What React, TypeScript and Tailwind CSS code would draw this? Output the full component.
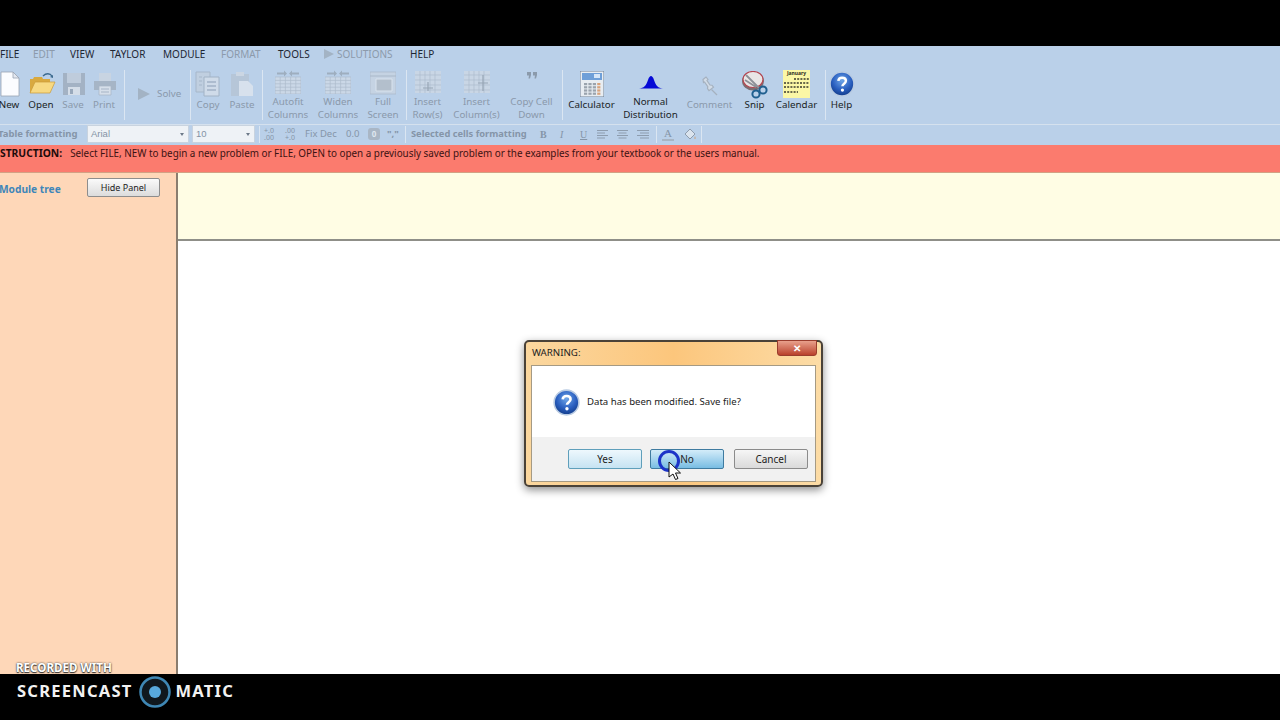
import React from "react";

const font = "font-['Noto_Sans','Open_Sans',sans-serif]";

function NewIcon() {
  return (
    <svg width="26" height="26" viewBox="0 0 26 26">
      <path d="M5 1h12l6 6v18H5z" fill="#fbfcff" stroke="#9aa3b2" strokeWidth="0.8" />
      <path d="M17 1v6h6z" fill="#e4e8f0" stroke="#9aa3b2" strokeWidth="0.8" />
    </svg>
  );
}
function OpenIcon() {
  return (
    <svg width="28" height="26" viewBox="0 0 28 26" className="ml-[2px]">
      <path d="M2 22V8h3l1-2h8l1 2h7v14z" fill="#d9a93f" />
      <path d="M2 22l5-11h20l-5 11z" fill="#f7d982" stroke="#c99a36" strokeWidth="0.7" />
      <path d="M15 5c3-3 7-3 9 0" fill="none" stroke="#3c6a8e" strokeWidth="1.3" />
      <path d="M25 7l-3-1 3-2z" fill="#3c6a8e" />
    </svg>
  );
}
function SaveIcon() {
  return (
    <svg width="24" height="24" viewBox="0 0 24 24" className="mt-[1px] ml-[2px]">
      <path d="M1 1h22v22H1z" fill="#a3b2c4" />
      <path d="M5 1h14v10H5z" fill="#bfccdc" />
      <path d="M6 15h12v8H6z" fill="#d4dde8" />
      <path d="M8 17h3v5H8z" fill="#98a8bb" />
    </svg>
  );
}
function PrintIcon() {
  return (
    <svg width="24" height="24" viewBox="0 0 24 24" className="mt-[1px] ml-[1px]">
      <path d="M6 1h12v8H6z" fill="#c8d4e2" />
      <path d="M1 9h22v9H1z" fill="#a6b5c6" />
      <path d="M6 14h12v9H6z" fill="#d6dfea" stroke="#a6b4c6" strokeWidth="0.7" />
      <path d="M8 17h8M8 20h8" stroke="#a6b4c6" strokeWidth="1" />
    </svg>
  );
}
function CopyIcon() {
  return (
    <svg width="26" height="26" viewBox="0 0 26 26">
      <path d="M1 1h14v20H1z" fill="#c0cfe0" stroke="#a6b7ca" />
      <path d="M9 6h15v19H9z" fill="#cfdbe9" stroke="#a2b3c6" />
      <path d="M12 11h9M12 15h9M12 19h9" stroke="#a2b3c6" strokeWidth="1.4" />
      <path d="M4 6h3M4 10h3M4 14h3" stroke="#a6b7ca" />
    </svg>
  );
}
function PasteIcon() {
  return (
    <svg width="24" height="26" viewBox="0 0 24 26">
      <path d="M1 3h18v22H1z" fill="#b6c6d8" />
      <path d="M6 1h8v4H6z" fill="#cbd6e3" />
      <path d="M9 10h9l5 5v10H9z" fill="#d7e1ed" />
    </svg>
  );
}
function GridIcon() {
  const w = 26;
  const h = 17;
  const cols = [0, 5.2, 10.4, 15.6, 20.8, 26];
  const rows = [0, 3.4, 6.8, 10.2, 13.6, 17];
  return (
    <svg width={w} height={h + 7} viewBox={`0 0 ${w} ${h + 7}`} className="-mt-[1px]">
      <path d="M2 2.500h7V.5l3 3-3 3v-2H2z" fill="#9eaebf" />
      <path d="M24 2.500h-7V.5l-3 3 3 3v-2h7z" fill="#9eaebf" />
      <rect x="0" y="7" width={w} height={h} fill="#cbd8e7" />
      {cols.map((x) => (
        <path key={x} d={`M${x} 7v${h}`} stroke="#adbccd" strokeWidth="0.7" />
      ))}
      {rows.map((y) => (
        <path key={y} d={`M0 ${y + 7}h${w}`} stroke="#adbccd" strokeWidth="0.7" />
      ))}
    </svg>
  );
}
function FullScreenIcon() {
  return (
    <svg width="26" height="24" viewBox="0 0 26 24">
      <path d="M0 1h26v22H0z" fill="#c5d3e3" stroke="#a9b8c9" strokeWidth="0.7" />
      <path d="M0 5h26" stroke="#a9b8c9" />
      <path d="M6 8h16v12H6z" fill="#b3bfcc" stroke="#d9e3ee" />
    </svg>
  );
}
function InsertIcon({ col = false }: { col?: boolean }) {
  return (
    <svg width="26" height="22" viewBox="0 0 26 22">
      <rect width="26" height="22" fill="#c9d6e5" />
      {[5, 10, 15, 20].map((x) => (
        <path key={x} d={`M${x} 0v22`} stroke="#adbccd" strokeWidth="0.7" />
      ))}
      {[4, 9, 14, 19].map((y) => (
        <path key={y} d={`M0 ${y}h26`} stroke="#adbccd" strokeWidth="0.7" />
      ))}
      {col ? (
        <path d="M19 4v16M14 12h10" stroke="#97a5b5" strokeWidth="1.2" />
      ) : (
        <path d="M13 11v9M8 17h10" stroke="#97a5b5" strokeWidth="1.2" />
      )}
    </svg>
  );
}
function CopyDownIcon() {
  return (
    <svg width="10" height="7" viewBox="0 0 10 7" className="mt-[1px]">
      <path d="M0 0h4v3L3 6.500H1.500L2 3.500H0zM6 0h4v3L9 6.500H7.500L8 3.500H6z" fill="#8b9aab" />
    </svg>
  );
}
function CalculatorIcon() {
  const cells = [];
  for (let r = 0; r < 4; r++) {
    for (let c = 0; c < 4; c++) {
      cells.push(
        <rect key={`${r}-${c}`} x={4 + c * 4.4} y={12 + r * 3.2} width="3.2" height="2.2" fill={c === 3 ? "#d8a37c" : "#9aa3ad"} />
      );
    }
  }
  return (
    <svg width="24" height="26" viewBox="0 0 24 26">
      <path d="M0 0h24v26H0z" fill="#e8edf2" stroke="#6c7f95" />
      <path d="M2 2h20v7H2z" fill="#6f9fd8" />
      <path d="M14 3h6v4h-6z" fill="#d6e6f8" />
      {cells}
    </svg>
  );
}
function NormalIcon() {
  return (
    <svg width="24" height="14" viewBox="0 0 24 14" className="mt-[4px]">
      <path d="M0 13.5C5 13 7 11 9 5c1-3 2-4 3-4s2 1 3 4c2 6 4 8 9 8.500z" fill="#0509d6" />
    </svg>
  );
}
function PinIcon() {
  return (
    <svg width="16" height="20" viewBox="0 0 16 20" fill="none" stroke="#a5b1bf" strokeWidth="1.2" className="mt-[5px]">
      <path d="M1 3.500L4 1l2 2.500-1 1L8 9l2 .2 1.500 2-4.500 3.500-1.500-2 .3-2L2.500 6 1.500 6.500z" fill="#d2dce7" />
      <path d="M9.500 13.500L15 19" />
    </svg>
  );
}
function SnipIcon() {
  return (
    <svg width="28" height="28" viewBox="0 0 28 28">
      <ellipse cx="12" cy="10" rx="11" ry="9.500" fill="#7a6e72" />
      <ellipse cx="12" cy="8.500" rx="10" ry="8" fill="#e9e6e6" stroke="#b64550" strokeWidth="1.2" />
      <path d="M5 4l13 13M4 9l11 7" stroke="#8d9097" strokeWidth="1.8" />
      <circle cx="22" cy="19" r="3.600" fill="none" stroke="#1f5f8f" strokeWidth="2" />
      <circle cx="15" cy="23" r="3.600" fill="none" stroke="#1f5f8f" strokeWidth="2" />
    </svg>
  );
}
function CalendarIcon() {
  const rows = [9, 13, 17, 21];
  return (
    <div className="relative -mt-[1px] h-[28px] w-[27px] shrink-0 bg-[#fbf7a6]">
      <div className="text-center text-[5px] leading-[6px] font-bold text-[#2b2b20]">January</div>
      <svg className="absolute top-0 left-0" width="27" height="28" viewBox="0 0 27 28">
        {rows.map((y, i) => (
          <path
            key={y}
            d={i === 0 ? `M11 ${y}h15` : i === 3 ? `M1 ${y + 1}h14` : `M1 ${y}h25`}
            stroke="#3a3a2c"
            strokeWidth="1.3"
            strokeDasharray="2 1.2"
          />
        ))}
      </svg>
    </div>
  );
}
function HelpIcon({ size = 24, className = "" }: { size?: number; className?: string }) {
  return (
    <svg width={size} height={size} viewBox="0 0 24 24" className={className}>
      <defs>
        <radialGradient id="helpg" cx="50%" cy="35%" r="65%">
          <stop offset="0" stopColor="#6fa6e8" />
          <stop offset="0.6" stopColor="#2a5fc0" />
          <stop offset="1" stopColor="#123c8a" />
        </radialGradient>
      </defs>
      <circle cx="12" cy="12" r="11" fill="url(#helpg)" stroke="#b9cbe2" strokeWidth="1.4" />
      <path d="M8.600 9.200c.2-2 1.600-3 3.500-3 2 0 3.500 1.100 3.500 2.900 0 2.600-3.200 2.600-3.200 5" fill="none" stroke="#fff" strokeWidth="2.300" />
      <circle cx="12.400" cy="17.600" r="1.500" fill="#fff" />
    </svg>
  );
}
function SolveArrow() {
  return (
    <svg width="14" height="14" viewBox="0 0 14 14">
      <path d="M1 1l12 6-12 6z" fill="#a3b3c4" />
    </svg>
  );
}

type Tool = {
  width: string;
  icon: React.ReactNode;
  label: React.ReactNode;
  on?: boolean;
  two?: boolean;
};

function ToolButton({ width, icon, label, on, two }: Tool) {
  return (
    <div className={`flex h-full shrink-0 flex-col items-center ${width}`}>
      <div className="flex h-[27px] items-start justify-center overflow-visible">{icon}</div>
      <div className={`text-center text-[9.800px] leading-[13px] whitespace-nowrap ${two ? "-mt-[3px]" : ""} ${on ? "text-[#1a1f26]" : "text-[#8a99ab]"}`}>
        {label}
      </div>
    </div>
  );
}

function Sep({ className }: { className: string }) {
  return <div className={`-mt-[1px] h-[50px] w-[1px] shrink-0 self-start bg-[#dbe6f2] ${className}`} />;
}

function MenuBar() {
  const items = [
    ["FILE", "w-[33px] text-[#1d2633]"],
    ["EDIT", "w-[37px] text-[#8c9aab]"],
    ["VIEW", "w-[40px] text-[#1d2633]"],
    ["TAYLOR", "w-[53px] text-[#1d2633]"],
    ["MODULE", "w-[58px] text-[#1d2633]"],
    ["FORMAT", "w-[57px] text-[#8c9aab]"],
  ];
  return (
    <div className="flex h-[15px] shrink-0 items-center text-[10px] leading-[14px] whitespace-nowrap">
      {items.map(([t, c]) => (
        <div key={t} className={c}>{t}</div>
      ))}
      <div className="w-[45px] text-[#1d2633]">TOOLS</div>
      <div className="flex w-[87px] items-center text-[#8c9aab]">
        <svg width="12" height="12" viewBox="0 0 12 12" className="mr-[2px]">
          <path d="M1 1l10 5-10 5z" fill="#a3b3c4" />
        </svg>
        SOLUTIONS
      </div>
      <div className="text-[#1d2633]">HELP</div>
    </div>
  );
}

function Toolbar() {
  return (
    <div className="flex h-[63px] shrink-0 items-start pt-[10px]">
      <div className="flex h-[50px] w-[120px] shrink-0 -translate-x-[6px]">
        <ToolButton width="w-[30px]" icon={<NewIcon />} label="New" on />
        <ToolButton width="w-[34px]" icon={<OpenIcon />} label="Open" on />
        <ToolButton width="w-[30px]" icon={<SaveIcon />} label="Save" />
        <ToolButton width="w-[32px]" icon={<PrintIcon />} label="Print" />
      </div>
      <Sep className="ml-[4px]" />
      <div className="flex h-[46px] w-[65px] shrink-0 items-center pl-[12px] text-[9.800px] text-[#8a99ab]">
        <SolveArrow />
        <span className="ml-[6px]">Solve</span>
      </div>
      <Sep className="" />
      <ToolButton width="w-[34px]" icon={<CopyIcon />} label="Copy" />
      <ToolButton width="w-[34px]" icon={<PasteIcon />} label="Paste" />
      <Sep className="ml-[3px]" />
      <ToolButton width="w-[50px]" icon={<GridIcon />} label={<>Autofit<br />Columns</>} two />
      <ToolButton width="w-[50px]" icon={<GridIcon />} label={<>Widen<br />Columns</>} two />
      <ToolButton width="w-[40px]" icon={<FullScreenIcon />} label={<>Full<br />Screen</>} two />
      <Sep className="ml-[3px]" />
      <ToolButton width="w-[41px]" icon={<InsertIcon />} label={<>Insert<br />Row(s)</>} two />
      <ToolButton width="w-[57px]" icon={<InsertIcon col />} label={<>Insert<br />Column(s)</>} two />
      <ToolButton width="w-[53px]" icon={<CopyDownIcon />} label={<>Copy Cell<br />Down</>} two />
      <Sep className="ml-[4px]" />
      <ToolButton width="w-[57px]" icon={<CalculatorIcon />} label="Calculator" on />
      <ToolButton width="w-[61px]" icon={<NormalIcon />} label={<>Normal<br />Distribution</>} on two />
      <ToolButton width="w-[57px]" icon={<PinIcon />} label="Comment" />
      <ToolButton width="w-[33px]" icon={<SnipIcon />} label="Snip" on />
      <ToolButton width="w-[51px]" icon={<CalendarIcon />} label="Calendar" on />
      <Sep className="ml-[3px]" />
      <ToolButton width="w-[31px]" icon={<HelpIcon size={26} className="ml-[1px]" />} label="Help" on />
    </div>
  );
}

function Combo({ width, text }: { width: string; text: string }) {
  return (
    <div className={`flex h-[18px] shrink-0 items-center justify-between border border-[#c8d3df] bg-[#eef2f6] pr-[4px] pl-[3px] text-[9.500px] text-[#8493a5] ${width}`}>
      <span className="font-['Liberation_Sans',sans-serif]">{text}</span>
      <span className="h-0 w-0 border-x-[2.500px] border-t-[3px] border-x-transparent border-t-[#6d7a89]" />
    </div>
  );
}

function FormatSep({ className }: { className: string }) {
  return <div className={`h-[17px] w-[1px] shrink-0 bg-[#dbe6f2] ${className}`} />;
}

function FormatBar() {
  return (
    <div className="flex h-[21px] shrink-0 items-center border-t border-[#d5e1ee] pb-[2px] text-[9.500px] whitespace-nowrap text-[#8595a8]">
      <div className="w-[87px] shrink-0 -translate-x-[2px] font-bold">Table formatting</div>
      <Combo width="w-[102px]" text="Arial" />
      <Combo width="w-[63px] ml-[3px]" text="10" />
      <FormatSep className="ml-[4px]" />
      <span className="ml-[4px] w-[21px] text-[7px] leading-[7px]">+.0<br />.00</span>
      <span className="w-[20px] text-[7px] leading-[7px]">.00<br />+.0</span>
      <span className="w-[41px]">Fix Dec</span>
      <span className="w-[22px]">0.0</span>
      <span className="flex h-[12px] w-[12px] items-center justify-center rounded-[3px] bg-[#a9b6c5] text-[8px] font-bold text-[#dfe7f0]">0</span>
      <span className="ml-[7px] w-[18px] font-bold">","</span>
      <FormatSep className="" />
      <span className="ml-[5px] w-[129px] text-[9.300px] font-bold">Selected cells formatting</span>
      <span className="w-[20px] font-['Liberation_Serif',serif] text-[10px] font-bold">B</span>
      <span className="w-[20px] font-['Liberation_Serif',serif] text-[10px] italic">I</span>
      <span className="w-[17px] font-['Liberation_Serif',serif] text-[10px] underline">U</span>
      <svg width="52" height="11" viewBox="0 0 52 11" stroke="#8d9cae" strokeWidth="1">
        <path d="M0 1.500h11M0 4h8M0 6.500h11M0 9h8" />
        <path d="M20 1.500h11M21.500 4h8M20 6.500h11M21.500 9h8" />
        <path d="M40 1.500h12M43 4h9M40 6.500h12M43 9h9" />
      </svg>
      <FormatSep className="ml-[7px]" />
      <div className="ml-[5px] w-[12px] border-b-2 border-[#a8b5c4] text-center font-['Liberation_Serif',serif] text-[11px] leading-[11px]">A</div>
      <svg width="14" height="14" viewBox="0 0 14 14" className="ml-[9px]">
        <path d="M2 7l5-5 5 5-5 5z" fill="#dbe4ee" stroke="#8e9cad" />
        <path d="M12 9c1 2 1 3 0 3s-1-1 0-3z" fill="#c9a98c" />
      </svg>
      <FormatSep className="ml-[4px]" />
    </div>
  );
}

function Instruction() {
  return (
    <div className="flex h-[28px] shrink-0 items-start overflow-hidden border-b border-[#d2a184] bg-[#fb7b6e] pt-[1px] text-[9.850px] leading-[14px] whitespace-nowrap text-[#3a1212]">
      <span className="text-[10.300px] font-bold text-[#1d0b0b]">STRUCTION:</span>
      <span className="ml-[8px]">
        Select FILE, NEW to begin a new problem or FILE, OPEN to open a previously saved problem or the examples from your textbook or the users manual.
      </span>
    </div>
  );
}

function Body() {
  return (
    <div className="flex min-h-0 flex-1">
      <aside className="relative w-[178px] shrink-0 border-r-[2px] border-r-[#8a7d6f] bg-[#fed7b8]">
        <div className="flex items-start">
          <div className="mt-[9px] -ml-[1px] w-[88px] text-[10.200px] font-bold whitespace-nowrap text-[#3f86b8]">Module tree</div>
          <button className="mt-[5px] h-[19px] w-[73px] rounded-[2px] border border-[#8d8d8d] bg-gradient-to-b from-[#fafafa] to-[#dcdcdc] text-[9px] leading-[15px] text-[#222]">
            Hide Panel
          </button>
        </div>
        <div className="absolute bottom-0 left-[16px] text-[11.600px] leading-[12px] font-bold whitespace-nowrap text-white [text-shadow:0_1px_1px_#333,0_0_2px_#333]">
          RECORDED WITH
        </div>
      </aside>
      <main className="flex min-w-0 flex-1 flex-col bg-white">
        <div className="h-[68px] shrink-0 border-b-[2px] border-[#8f8f88] bg-[#fffde4]" />
      </main>
    </div>
  );
}

function DialogButton({ label, tone }: { label: string; tone: "blue" | "hot" | "gray" }) {
  const tones = {
    blue: "border-[#5f9fbb] from-[#eef8fd] to-[#c6e3f2]",
    hot: "border-[#3f7ba0] from-[#d3ecf9] to-[#78bde3]",
    gray: "border-[#8b8b8b] from-[#f6f6f6] to-[#dadada]",
  };
  return (
    <div className={`flex h-[20px] w-[74px] items-center justify-center rounded-[2px] border bg-gradient-to-b text-[10px] text-[#222] ${tones[tone]}`}>
      {label}
    </div>
  );
}

function Dialog() {
  return (
    <div className="absolute top-[340px] left-[524px] flex h-[147px] w-[299px] flex-col rounded-[5px] border-[2px] border-[#4a4238] bg-gradient-to-r from-[#fbd79e] via-[#fcc67c] to-[#fcdca6] px-[5px] pb-[3px] shadow-[0_3px_8px_rgba(0,0,0,0.45)]">
      <div className="relative flex h-[23px] shrink-0 items-center pl-[1px] text-[9.700px] text-[#222]">
        WARNING:
        <div className="absolute top-[-2px] right-[-1px] flex h-[16px] w-[40px] items-center justify-center rounded-b-[3px] border border-[#9a3d2d] bg-gradient-to-b from-[#e8a08c] to-[#b9402b] text-[10px] leading-[10px] font-bold text-white">
          ✕
        </div>
      </div>
      <div className="flex min-h-0 flex-1 flex-col border border-[#a59a84] bg-white">
        <div className="flex h-[71px] shrink-0 items-center pt-[2px] pl-[21px] text-[9.600px] text-[#222]">
          <HelpIcon size={27} />
          <span className="ml-[7px]">Data has been modified. Save file?</span>
        </div>
        <div className="flex flex-1 items-center bg-[#f1f1f1] pl-[36px]">
          <DialogButton label="Yes" tone="blue" />
          <div className="ml-[8px]"><DialogButton label="No" tone="hot" /></div>
          <div className="ml-[10px]"><DialogButton label="Cancel" tone="gray" /></div>
        </div>
      </div>
    </div>
  );
}

function Cursor() {
  return (
    <div className="absolute top-[450px] left-[658px]">
      <div className="h-[22px] w-[22px] rounded-full border-[3px] border-[#1c34c8]" />
      <svg className="absolute top-[11px] left-[10px]" width="14" height="20" viewBox="0 0 14 20">
        <path d="M1 1v15l4-3 2.500 5.500 2.500-1-2.500-5.500h5z" fill="#fff" stroke="#111" strokeWidth="1" />
      </svg>
    </div>
  );
}

function Footer() {
  return (
    <div className="flex h-[46px] shrink-0 items-start bg-black pt-[2px] pl-[17px] text-[16.500px] leading-[30px] font-bold tracking-[1.250px] text-[#f2f2f2]">
      <span>SCREENCAST</span>
      <svg width="32" height="32" viewBox="0 0 32 32" className="ml-[6px] mr-[5px]">
        <circle cx="16" cy="16" r="14.500" fill="#10181e" stroke="#3f87b4" strokeWidth="2.500" />
        <circle cx="16" cy="16" r="6" fill="#58a9dd" />
      </svg>
      <span>MATIC</span>
    </div>
  );
}

export default function App() {
  return (
    <div className={`relative flex h-[720px] w-[1280px] flex-col overflow-hidden bg-black ${font}`}>
      <div className="h-[46px] shrink-0 bg-black" />
      <div className="flex h-[99px] shrink-0 flex-col overflow-hidden bg-[#bad0e9]">
        <MenuBar />
        <Toolbar />
        <FormatBar />
      </div>
      <Instruction />
      <Body />
      <Footer />
      <Dialog />
      <Cursor />
    </div>
  );
}
